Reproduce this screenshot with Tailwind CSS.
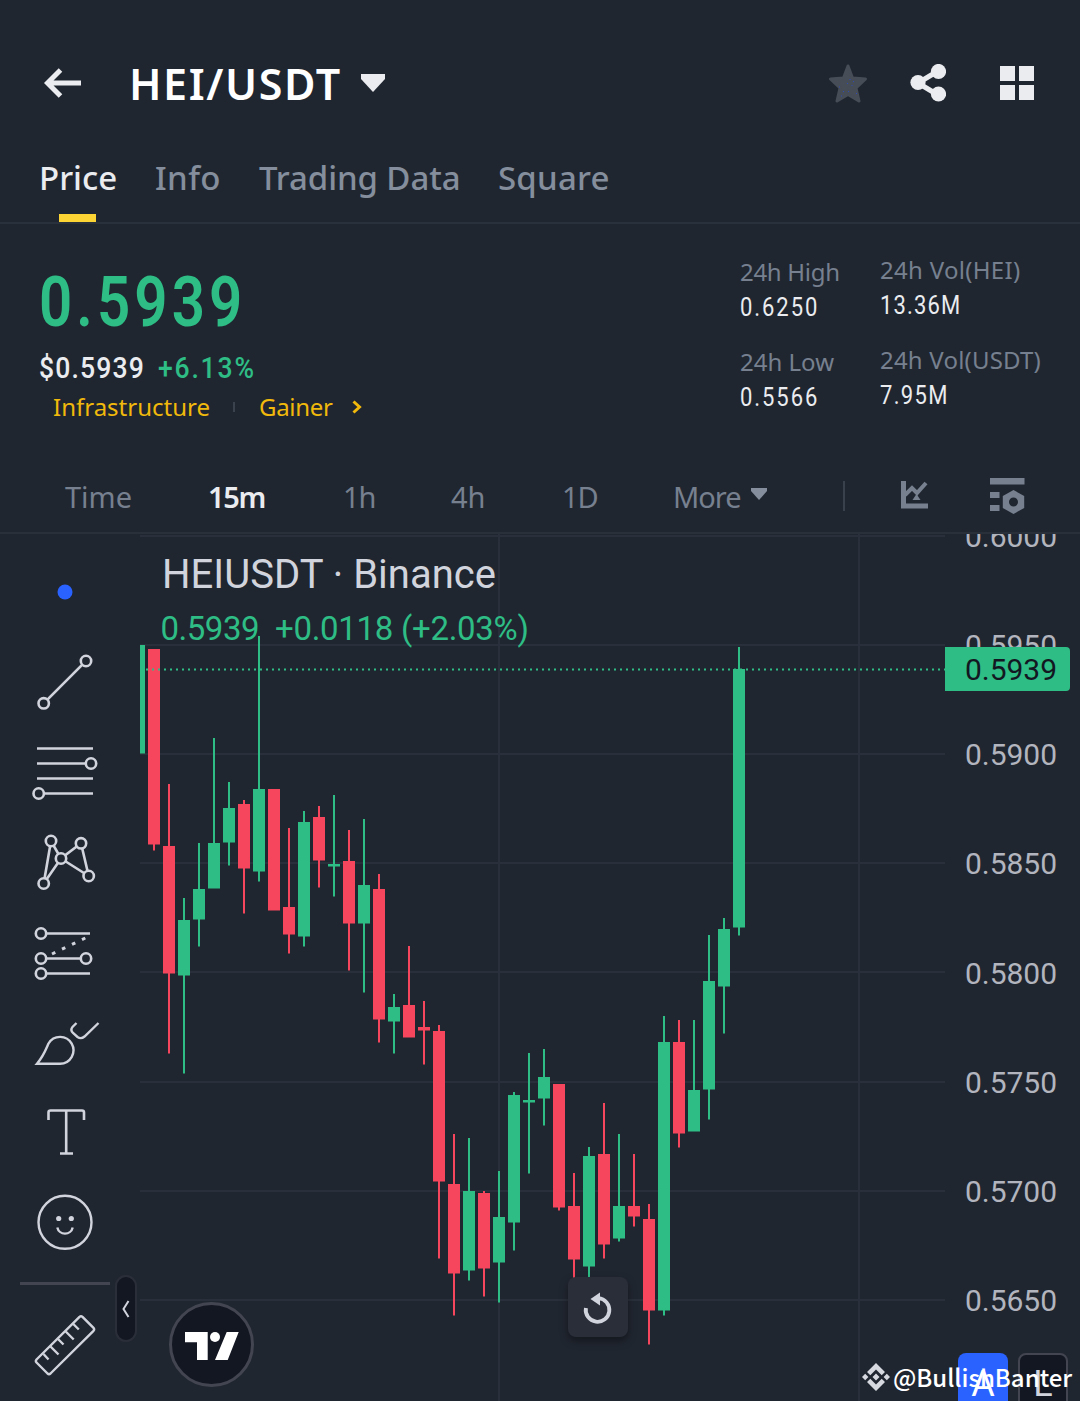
<!DOCTYPE html>
<html lang="en">
<head>
    <meta charset="UTF-8">
    <meta name="viewport" content="width=device-width, initial-scale=1.0">
    <title>HEI/USDT</title>
    <script src="https://cdn.jsdelivr.net/npm/@tailwindcss/browser@4"></script>
</head>
<body class="bg-[#202630] text-[#eaecef] font-['Noto_Sans',sans-serif] w-[1080px] h-[1401px] overflow-hidden whitespace-nowrap">
    <!-- Header -->
    <header class="h-[165px] flex items-center pl-11 pr-[46px]">
        <svg class="w-[38px] h-8" viewBox="0 0 38 32" fill="none" stroke="#eaecef" stroke-width="5">
            <path d="M16.500 3L3.500 16l13 13M3.500 16H37"/>
        </svg>
        <h1 class="ml-[47px] pt-[3px] w-[232px] text-[43px] font-semibold text-white tracking-[1.6px]">HEI/USDT</h1>
        <svg class="w-6 h-[18px]" viewBox="0 0 24 18" fill="#eaecef"><path d="M0 0h24v5L12 18 0 5z"/></svg>
        <div class="ml-auto flex items-center">
            <svg class="w-10 h-10" viewBox="0 0 40 40" fill="#474d57" stroke="#474d57" stroke-width="3" stroke-linejoin="round">
                <path d="M20 3l4.500 12 13 1-9.500 9 3 13L20 31.500 9 38l3-13-9.500-9 13-1z"/>
                <path d="M21.500 16.500h1M25 18.500h1M19 20.500h1M23.500 22.500h1M11 24h1M15 28.500h1M20 28.500h1M13 33h1M28 30.500h1" stroke="#2f4bb5" stroke-width="1.200"/>
            </svg>
            <svg class="ml-[42px] w-9 h-[38px]" viewBox="0 0 36 38" fill="#eaecef" stroke="#eaecef">
                <path d="M8 19L28 7M8 19l20 12" stroke-width="5"/>
                <g stroke="none"><circle cx="8" cy="18.500" r="7.600"/><circle cx="28.500" cy="7.500" r="7.600"/><circle cx="28.500" cy="30" r="7.600"/></g>
            </svg>
            <div class="ml-[54px] grid grid-cols-[15px_15px] grid-rows-[15px_15px] gap-1">
                <i class="bg-[#eaecef]"></i><i class="bg-[#eaecef]"></i>
                <i class="bg-[#eaecef]"></i><i class="bg-[#eaecef]"></i>
            </div>
        </div>
    </header>

    <!-- Tabs -->
    <nav class="h-[59px] border-b-2 border-[#29313c] grid grid-cols-[116px_104px_239px_1fr] pl-[39px] text-[33px] leading-[25px] font-medium text-[#848e9c]">
        <div class="text-[#eaecef] flex flex-col justify-between">
            <span>Price</span>
            <i class="ml-5 w-[37px] h-2 bg-[#fcd535]"></i>
        </div>
        <span class="tracking-[0.4px]">Info</span>
        <span class="tracking-[-0.1px]">Trading Data</span>
        <span class="tracking-[0.2px]">Square</span>
    </nav>

    <!-- Price summary -->
    <section class="h-[236px] flex">
        <div class="w-[740px] pt-[42px] pl-[39px]">
            <div class="origin-left scale-x-[0.82] text-[71px] leading-[72px] font-['Roboto',sans-serif] font-semibold text-[#2ebd85] tracking-[5px]">0.5939</div>
            <div class="mt-3 text-[29.5px] leading-9 font-['Roboto',sans-serif] font-medium flex">
                <div class="origin-left scale-x-90 w-[119px] tracking-[1.3px]">$0.5939</div>
                <div class="origin-left scale-x-90 text-[#2ebd85] tracking-[2px]">+6.13%</div>
            </div>
            <div class="mt-1.5 pl-3.5 text-[24px] leading-[30px] text-[#f0b90b] flex items-center">
                <span class="w-[180px]">Infrastructure</span>
                <i class="w-0.5 h-2.5 bg-[#3a424e]"></i>
                <span class="ml-6 w-[93px] tracking-[-0.3px]">Gainer</span>
                <svg class="w-[10px] h-[14px]" viewBox="0 0 10 14" fill="none" stroke="#f0b90b" stroke-width="3"><path d="M1.500 1.500L7.500 7l-6 5.500"/></svg>
            </div>
        </div>
        <div class="w-[140px] pt-[30px] text-[24px] leading-9">
            <div class="text-[#76808f] tracking-[-0.3px]">24h High</div>
            <div class="origin-left scale-x-[0.88] tracking-[2.2px] text-[25px] font-['Roboto',sans-serif]">0.6250</div>
            <div class="mt-[18px] text-[#76808f]">24h Low</div>
            <div class="origin-left scale-x-[0.88] tracking-[2.2px] text-[25px] font-['Roboto',sans-serif]">0.5566</div>
        </div>
        <div class="pt-7 text-[24px] leading-9">
            <div class="text-[#76808f] tracking-[0.3px]">24h Vol(HEI)</div>
            <div class="origin-left scale-x-[0.88] tracking-[1.3px] text-[25px] font-['Roboto',sans-serif]">13.36M</div>
            <div class="mt-[18px] text-[#76808f] tracking-[0.2px]">24h Vol(USDT)</div>
            <div class="origin-left scale-x-[0.88] tracking-[1.5px] text-[25px] font-['Roboto',sans-serif]">7.95M</div>
        </div>
    </section>

    <!-- Timeframes -->
    <div class="h-[74px] border-b-2 border-[#29303a] grid grid-cols-[143px_135px_108px_111px_111px_78px_92px_58px_89px_1fr] items-center pl-[65px] text-[29px] text-[#76808f]">
        <span class="pt-0.5">Time</span>
        <span class="pt-0.5 font-semibold text-[#eaecef] tracking-[-1.4px]">15m</span>
        <span class="pt-0.5 tracking-[-1px]">1h</span>
        <span class="pt-0.5">4h</span>
        <span class="pt-0.5 tracking-[-1px]">1D</span>
        <span class="pt-0.5 tracking-[-1px]">More</span>
        <svg class="w-4 h-3 mb-1" viewBox="0 0 16 12" fill="#848e9c"><path d="M0 0h16v3L8 12 0 3z"/></svg>
        <i class="w-0.5 h-[30px] bg-[#38414c]"></i>
        <svg class="w-[27px] h-7 mb-0.5" viewBox="0 0 27 28" fill="none" stroke="#76808f">
            <path d="M2.500 0v25H27" stroke-width="5"/>
            <path d="M4 14l7-7 5 5L25 2" stroke-width="4"/>
            <path d="M15.500 13l4 6h-8z" fill="#76808f" stroke="none"/>
        </svg>
        <svg class="w-[35px] h-9" viewBox="0 0 35 36" fill="#76808f">
            <path d="M0 0h34.500v6.500H0zM0 14h9.500v6H0zM0 27h9.500v6H0z"/>
            <path fill-rule="evenodd" d="M23.500 12l10.700 6v12l-10.700 6-10.700-6V18zM23.500 19.500a4.500 4.500 0 1 0 0 9 4.500 4.500 0 0 0 0-9z"/>
        </svg>
    </div>

    <main class="h-[867px] flex relative">
        <!-- Drawing tools -->
        <aside class="w-[140px] pt-[13px] pl-5 flex flex-col">
            <svg class="size-[90px] shrink-0" viewBox="0 0 90 90"><circle cx="45" cy="45" r="7.500" fill="#2962ff"/></svg>
            <svg class="size-[90px] shrink-0" viewBox="0 0 90 90" fill="none" stroke="#d1d4dc" stroke-width="2.600">
                <circle cx="66" cy="24" r="5.200"/><circle cx="23.700" cy="66.300" r="5.200"/><path d="M62.300 27.700L27.400 62.600"/>
            </svg>
            <svg class="size-[90px] shrink-0" viewBox="0 0 90 90" fill="none" stroke="#d1d4dc" stroke-width="2.600">
                <path d="M17 21.500h56M17 36.500h49M17 51.500h56M24 66.500h49"/>
                <circle cx="71" cy="36.500" r="5.200"/><circle cx="18.700" cy="66.500" r="5.200"/>
            </svg>
            <svg class="size-[90px] shrink-0" viewBox="0 0 90 90" fill="#202630" stroke="#d1d4dc" stroke-width="2.600">
                <path d="M31 24L23.700 66.500 41 41.500zM61 26.300L41 41.500 68.700 59z" fill="none"/>
                <circle cx="31" cy="24" r="5.200"/><circle cx="61" cy="26.300" r="5.200"/><circle cx="41" cy="41.500" r="5.200"/>
                <circle cx="23.700" cy="66.500" r="5.200"/><circle cx="68.700" cy="59" r="5.200"/>
            </svg>
            <svg class="size-[90px] shrink-0" viewBox="0 0 90 90" fill="none" stroke="#d1d4dc" stroke-width="2.600">
                <path d="M26 26.500h44M26 51.500h35M26 66.500h44"/>
                <path d="M32 47l3.300-1.600M42 42.200l3.300-1.600M52 37.400l3.300-1.600M62 32.600l3.300-1.600" stroke-width="3"/>
                <circle cx="21" cy="26.500" r="5.200"/><circle cx="21" cy="51.500" r="5.200"/><circle cx="66" cy="51.500" r="5.200"/><circle cx="21" cy="66.500" r="5.200"/>
            </svg>
            <svg class="size-[90px] shrink-0" viewBox="0 0 90 90" fill="none" stroke="#d1d4dc" stroke-width="2.400">
                <path d="M17 66.700h23a13.400 13.400 0 1 0-11.500-20.200C26 52 24 58.500 17 66.700z"/>
                <path d="M56.500 26l-4 4q-2.500 3 .5 6l4.500 4q3.500 2.500 7-.5L78.500 26"/>
            </svg>
            <svg class="size-[90px] shrink-0" viewBox="0 0 90 90" fill="none" stroke="#d1d4dc" stroke-width="2.600">
                <path d="M28.500 33v-7.500q0-2 2-2H62q2 0 2 2V33M46.200 23.500v43M40 66.500h13"/>
            </svg>
            <svg class="size-[90px] shrink-0" viewBox="0 0 90 90" fill="none" stroke="#d1d4dc" stroke-width="2.400">
                <circle cx="45" cy="45.300" r="26.500"/><path d="M37.300 50.500a7.900 7.900 0 0 0 15.400 0"/>
                <g fill="#d1d4dc" stroke="none"><circle cx="38.700" cy="41.500" r="2.600"/><circle cx="51.300" cy="41.500" r="2.600"/></g>
            </svg>
            <i class="mt-[15px] mb-[15px] w-[90px] h-[3px] shrink-0 bg-[#434651]"></i>
            <svg class="size-[90px] shrink-0" viewBox="0 0 90 90" fill="none" stroke="#d1d4dc" stroke-width="2.400" stroke-linejoin="round">
                <path d="M16.500 59.500L59.500 16.800q1.500-1.300 3 0l11 11q1.300 1.500 0 3L30.500 73.500q-1.500 1.300-3 0l-11-11q-1.300-1.500 0-3z"/>
                <path d="M23.500 54l5 5.500M30.500 46.500l8 8M38 39l5.500 5.500M45.700 31.500l8 8M53.300 24l5.500 5.500"/>
            </svg>
        </aside>

        <!-- Candles, grid and price axis -->
        <svg class="w-[940px] h-[867px]" viewBox="140 534 940 867" font-family="Roboto, sans-serif">
            <g fill="#2a303b">
                <path d="M498 534h2v867h-2zM858 534h2v867h-2z"/>
                <path d="M140 535h805v2H140zM140 644h805v2H140zM140 753h805v2H140zM140 862h805v2H140zM140 971h805v2H140zM140 1081h805v2H140zM140 1190h805v2H140zM140 1299h805v2H140z"/>
            </g>
            <text x="162" y="587.500" font-size="40" fill="#d1d4dc" textLength="334">HEIUSDT · Binance</text>
            <g id="candles"></g>
            <path d="M146 669.500H945" stroke="#2ebd85" stroke-width="2" stroke-dasharray="2 4"/>
            <g font-size="33" fill="#2ebd85">
                <text x="160.500" y="639.500" textLength="99">0.5939</text>
                <text x="275" y="639.500" textLength="254">+0.0118 (+2.03%)</text>
            </g>
            <g font-size="30" fill="#b2b5be">
                <text x="965" y="547" textLength="92">0.6000</text>
                <text x="965" y="655.500" textLength="92">0.5950</text>
                <text x="965" y="765" textLength="92">0.5900</text>
                <text x="965" y="874" textLength="92">0.5850</text>
                <text x="965" y="984" textLength="92">0.5800</text>
                <text x="965" y="1093" textLength="92">0.5750</text>
                <text x="965" y="1202" textLength="92">0.5700</text>
                <text x="965" y="1311" textLength="92">0.5650</text>
            </g>
            <path d="M945 647h121q4 0 4 4v36q0 4-4 4H945z" fill="#2ebd85"/>
            <text x="965" y="680" font-size="30" fill="#131722" textLength="92">0.5939</text>
        </svg>

        <!-- Overlays on the chart -->
        <div class="absolute left-[115px] top-[741px] w-[22px] h-[67px] rounded-full bg-[#131722] border-2 border-[#2a2e39] flex items-center justify-center">
            <svg class="w-2 h-[18px]" viewBox="0 0 8 18" fill="none" stroke="#d1d4dc" stroke-width="2"><path d="M6.500 1L1.500 9l5 8"/></svg>
        </div>
        <div class="absolute left-[169px] top-[768px] size-[85px] rounded-full bg-[#131722] border-[3px] border-[#434651] flex items-center justify-center pt-0.5">
            <svg class="w-[54px] h-7" viewBox="185 1332 54 28" fill="#fff">
                <path d="M185 1332h22.700v28H197v-17.700h-12zM226.700 1332h12l-11 28H215z"/><circle cx="215" cy="1337" r="5"/>
            </svg>
        </div>
        <div class="absolute left-[568px] top-[743px] size-[60px] rounded-lg bg-[#2a2e39] shadow-[0_4px_8px_rgba(0,0,0,0.4)]">
            <svg class="size-[60px]" viewBox="568 1277 60 60" fill="none" stroke="#d1d4dc" stroke-width="3.800">
                <path d="M585.900 1308a11.800 11.800 0 1 0 12.500-9.800"/><path d="M590.500 1299l9.500-6.500v13z" fill="#d1d4dc" stroke="none"/>
            </svg>
        </div>
        <div class="absolute left-[958px] top-[819px] w-[50px] h-[60px] rounded-lg bg-[#2962ff] text-white text-center text-[36px] leading-[54px] pt-1 font-['Roboto',sans-serif]">A</div>
        <div class="absolute left-[1018px] top-[819px] w-[50px] h-[60px] rounded-lg bg-[#131722] border-2 border-[#434651] text-[#d1d4dc] text-center text-[36px] leading-[50px] pt-1 font-['Roboto',sans-serif]">L</div>
        <div class="absolute left-[862px] top-[825px] flex items-center gap-[3px] h-9 text-white text-[24px] font-['Noto_Sans_CJK_SC',sans-serif] font-medium">
            <svg class="size-7" viewBox="0 0 28 28" fill="#d6d9df">
                <path d="M14 0l9 9-3.300 3.300L14 6.600l-5.700 5.700L5 9zM14 28l9-9-3.300-3.300-5.700 5.700-5.700-5.700L5 19zM3.200 10.800L6.400 14l-3.200 3.200L0 14zM24.800 10.800L28 14l-3.200 3.200-3.200-3.200zM14 10.500l3.500 3.500-3.500 3.500-3.500-3.500z"/>
            </svg>
            <span>@BullishBanter</span>
        </div>
    </main>

    <script>
        // [direction, wick top, body top, body bottom, wick bottom], one candle every 15px
        const candles = [
            ['r', 649, 649, 844.5, 850.5], ['r', 784, 846, 973.5, 1053.5], ['g', 898, 920, 975.5, 1073.5],
            ['g', 843, 889, 919.5, 946.5], ['g', 738, 843, 888.5, 888.5], ['g', 782, 808, 842.5, 865.5],
            ['r', 800, 804, 868.5, 913.5], ['g', 636, 789, 871.5, 881.5], ['r', 789, 789, 910.5, 910.5],
            ['r', 828, 907, 934.5, 953.5], ['g', 811, 822, 936.5, 946.5], ['r', 806, 817, 860.5, 887.5],
            ['g', 795, 864, 866.5, 896.5], ['r', 830, 861, 923.5, 970.5], ['g', 819, 885, 923.5, 992.5],
            ['r', 874, 889, 1019.5, 1042.5], ['g', 994, 1007, 1021.5, 1053.5], ['r', 946, 1005, 1037.5, 1037.5],
            ['r', 1001, 1027, 1030.5, 1064.5], ['r', 1025, 1031, 1181.5, 1258.5], ['r', 1134, 1184, 1273.5, 1315.5],
            ['g', 1138, 1191, 1270.5, 1280.5], ['r', 1191, 1193, 1268.5, 1296.5], ['g', 1171, 1217, 1262.5, 1302.5],
            ['g', 1092, 1095, 1222.5, 1250.5], ['g', 1053, 1100, 1102.5, 1173.5], ['g', 1049, 1077, 1098.5, 1125.5],
            ['r', 1084, 1084, 1207.5, 1210.5], ['r', 1173, 1206, 1259.5, 1290], ['g', 1147, 1156, 1266.5, 1290],
            ['r', 1103, 1154, 1244.5, 1258.5], ['g', 1134, 1206, 1238.5, 1241.5], ['r', 1154, 1206, 1216.5, 1226.5],
            ['r', 1204, 1219, 1310.5, 1344.5], ['g', 1016, 1042, 1310.5, 1315.5], ['r', 1020, 1042, 1133.5, 1147.5],
            ['g', 1020, 1090, 1131.5, 1131.5], ['g', 935, 981, 1089.5, 1119.5], ['g', 918, 929, 986.5, 1033.5],
            ['g', 647, 669, 927.5, 935.5]
        ];
        let html = '<path d="M140 645h5v108.500h-5z" fill="#2ebd85"/>';
        candles.forEach(([dir, high, top, bottom, low], i) => {
            const x = 154 + i * 15;
            html += `<path d="M${x - 6} ${top}h12V${bottom}h-12zM${x - 1} ${high}h2V${low}h-2z" fill="${dir === 'g' ? '#2ebd85' : '#f6465d'}"/>`;
        });
        document.getElementById('candles').innerHTML = html;
    </script>
</body>
</html>
